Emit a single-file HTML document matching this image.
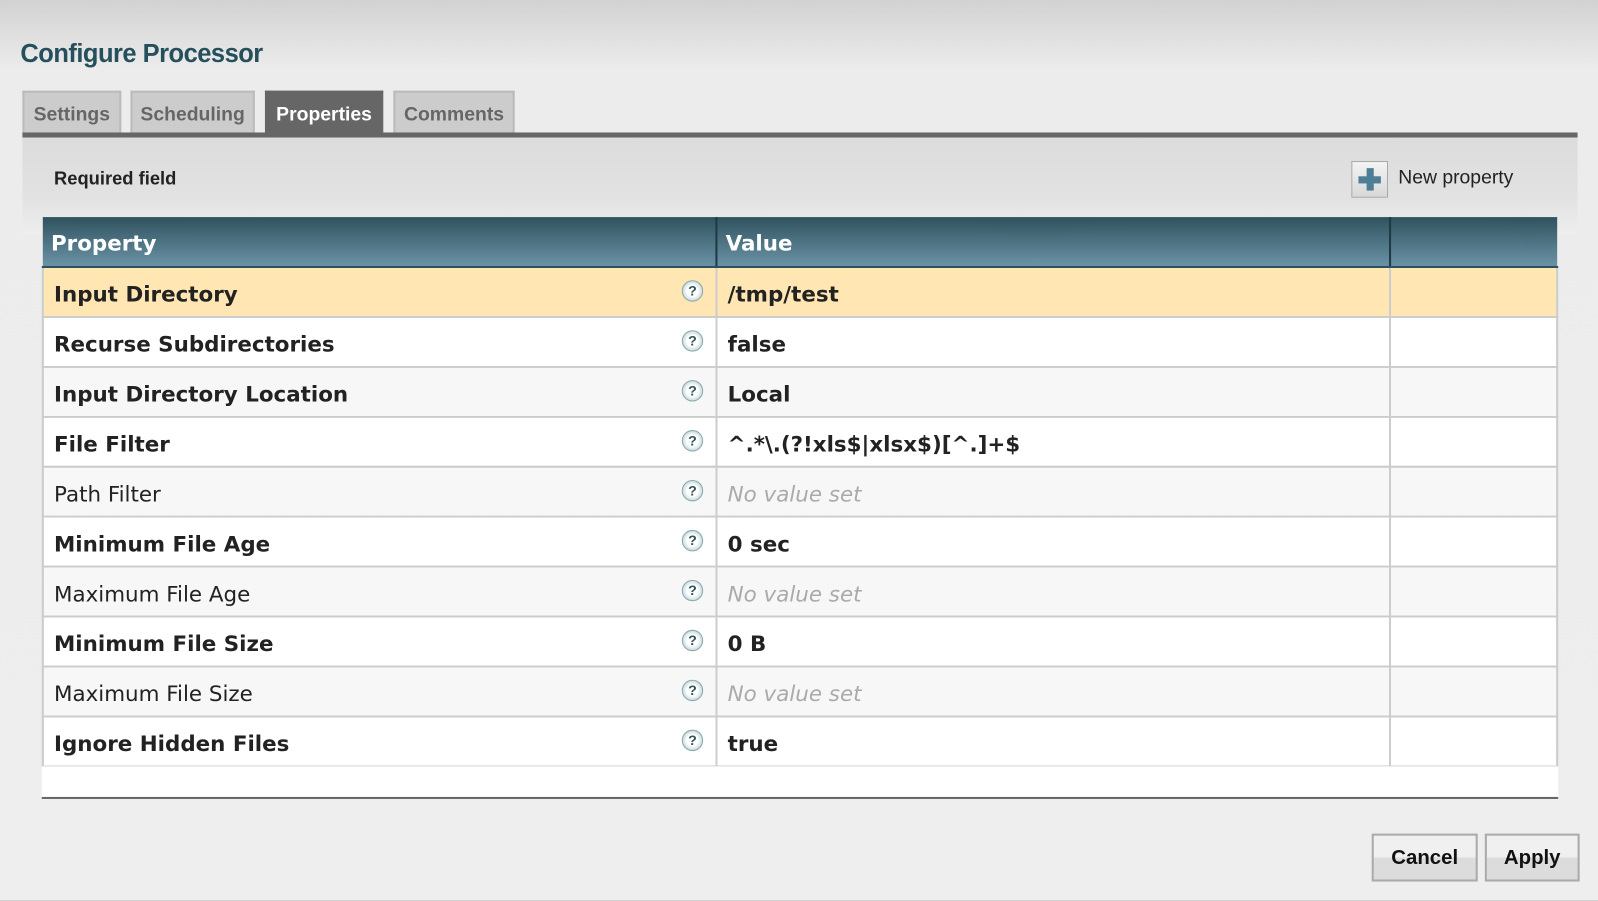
<!DOCTYPE html>
<html><head><meta charset="utf-8"><style>
*{margin:0;padding:0;box-sizing:border-box}
body{width:1598px;height:900px;overflow:hidden;background:linear-gradient(#d2d2d2 0px,#ececec 70px,#eeeeee 900px);font-family:"Liberation Sans",sans-serif}
#w{position:absolute;left:0;top:0;width:1568px;height:884px;transform:scale(1.0191);transform-origin:0 0}
.title{position:absolute;left:20px;top:39px;font-size:25px;color:#264f5c;font-weight:bold;letter-spacing:-0.5px}
.tab{position:absolute;top:89px;height:42px;background:#ccc;border:2px solid #bbb;border-bottom:none;color:#666;font-weight:bold;font-size:19px;line-height:43px;text-align:center}
.tab.on{background:#666;color:#fff;border-color:#666}
.bar{position:absolute;left:22px;top:130px;width:1526px;height:5px;background:#666}
.panel{position:absolute;left:22px;top:135px;width:1526px;height:95px;background:linear-gradient(#dcdcdc,#e2e2e2 60px,#eee)}
.req{position:absolute;left:53px;top:165px;font-size:18px;font-weight:bold;color:#222}
.np{position:absolute;left:1372px;top:164px;font-size:19px;color:#222}
.pb{position:absolute;left:1326px;top:158px;width:36px;height:36px;background:linear-gradient(#f4f4f4,#d8d8d8);border:1px solid #aaa}
table{position:absolute;left:41px;top:213px;width:1488px;border-collapse:collapse;font-family:"DejaVu Sans",sans-serif}
th{height:49px;background:linear-gradient(#30525e,#6a93a6);color:#fff;text-align:left;font-size:21px;padding-left:8px;padding-top:3px;border-right:2px solid #1e3a44;border-bottom:2px solid #2c5260}
td{height:49px;font-size:21px;color:#222;border:2px solid #ccc;border-top:none;padding-left:10px;padding-top:4px;position:relative}
tr:nth-child(odd) td{background:#fff}
tr:nth-child(even) td{background:#f7f7f7}
tr.sel td{background:#ffe6b3}
td.b{font-weight:bold}
.nv{font-style:italic;color:#aaa}
.q{position:absolute;right:12px;top:12px;width:21px;height:21px;border-radius:50%;background:radial-gradient(#fff 40%,#9fb8c6);border:1px solid #8aa;font-size:14px;line-height:19px;text-align:center;color:#355;font-weight:bold;font-family:"Liberation Sans",sans-serif}
.tail{position:absolute;left:41px;top:752px;width:1488px;height:32px;background:#fff;border-bottom:2px solid #666}
.btn{position:absolute;top:818px;height:47px;border:2px solid #aaa;background:linear-gradient(#f0f0f0 50%,#dcdcdc 50%);font-weight:bold;font-size:20px;line-height:45px;text-align:center;color:#111}
</style></head><body><div id="w">
<div class="title">Configure Processor</div>
<div class="tab" style="left:22px;width:97px">Settings</div>
<div class="tab" style="left:128px;width:122px">Scheduling</div>
<div class="tab on" style="left:260px;width:116px">Properties</div>
<div class="tab" style="left:386px;width:119px">Comments</div>
<div class="bar"></div>
<div class="panel"></div>
<div class="req">Required field</div>
<div class="pb"><svg width="34" height="34"><rect x="14" y="6" width="7" height="22" fill="#4d7e96"/><rect x="6" y="14" width="22" height="7" fill="#4d7e96"/></svg></div>
<div class="np">New property</div>
<table>
<tr><th style="width:661px">Property</th><th style="width:661px">Value</th><th style="border-right:none"></th></tr>
<tr class="sel"><td class="b">Input Directory<span class="q">?</span></td><td class="b">/tmp/test</td><td></td></tr>
<tr><td class="b">Recurse Subdirectories<span class="q">?</span></td><td class="b">false</td><td></td></tr>
<tr><td class="b">Input Directory Location<span class="q">?</span></td><td class="b">Local</td><td></td></tr>
<tr><td class="b">File Filter<span class="q">?</span></td><td class="b">^.*\.(?!xls$|xlsx$)[^.]+$</td><td></td></tr>
<tr><td>Path Filter<span class="q">?</span></td><td class="nv">No value set</td><td></td></tr>
<tr><td class="b">Minimum File Age<span class="q">?</span></td><td class="b">0 sec</td><td></td></tr>
<tr><td>Maximum File Age<span class="q">?</span></td><td class="nv">No value set</td><td></td></tr>
<tr><td class="b">Minimum File Size<span class="q">?</span></td><td class="b">0 B</td><td></td></tr>
<tr><td>Maximum File Size<span class="q">?</span></td><td class="nv">No value set</td><td></td></tr>
<tr><td class="b">Ignore Hidden Files<span class="q">?</span></td><td class="b">true</td><td></td></tr>
</table>
<div class="tail"></div>
<div class="btn" style="left:1346px;width:104px">Cancel</div>
<div class="btn" style="left:1457px;width:93px">Apply</div>
</div></body></html>
